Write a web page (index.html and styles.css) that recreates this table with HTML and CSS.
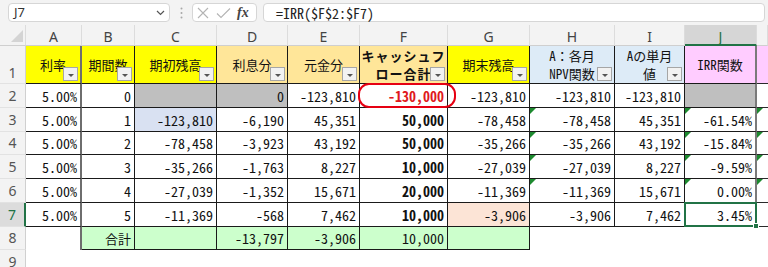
FILE: index.html
```html
<!DOCTYPE html>
<html lang="ja">
<head>
<meta charset="utf-8">
<title>IRR</title>
<link rel="stylesheet" href="styles.css">
</head>
<body>
<div class="app">
  <div class="fbar">
    <div class="namebox">
      <span class="nb-text">J7</span>
      <svg class="chev" width="9" height="6" viewBox="0 0 9 6"><path d="M1 1 L4.5 4.5 L8 1" fill="none" stroke="#555" stroke-width="1.2"/></svg>
    </div>
    <div class="dots">
      <svg width="3" height="12" viewBox="0 0 3 12"><circle cx="1.5" cy="1.5" r="1" fill="#a8a8a8"/><circle cx="1.5" cy="6" r="1" fill="#a8a8a8"/><circle cx="1.5" cy="10.5" r="1" fill="#a8a8a8"/></svg>
    </div>
    <div class="fxbox">
      <svg width="12" height="12" viewBox="0 0 12 12"><path d="M1 1 L11 11 M11 1 L1 11" stroke="#b4b4b4" stroke-width="1.1" fill="none"/></svg>
      <svg width="15" height="12" viewBox="0 0 15 12"><path d="M1 6.5 L5 10.5 L14 1.5" stroke="#b4b4b4" stroke-width="1.1" fill="none"/></svg>
      <span class="fx">fx</span>
    </div>
    <div class="formula">=IRR($F$2:$F7)</div>
  </div>

  <div class="sheet">
    <!-- column letters -->
    <div class="ch corner"><span class="tri-corner"></span></div>
    <div class="ch">A</div>
    <div class="ch">B</div>
    <div class="ch">C</div>
    <div class="ch">D</div>
    <div class="ch">E</div>
    <div class="ch">F</div>
    <div class="ch">G</div>
    <div class="ch">H</div>
    <div class="ch">I</div>
    <div class="ch sel">J</div>
    <div class="ch"></div>

    <!-- row 1 -->
    <div class="rh r1">1</div>
    <div class="c h b ab yel">利率<span class="fb"></span></div>
    <div class="c h b yel">期間数<span class="fb"></span></div>
    <div class="c h b yel">期初残高<span class="fb"></span></div>
    <div class="c h b org">利息分<span class="fb"></span></div>
    <div class="c h b org">元金分<span class="fb"></span></div>
    <div class="c h b org bold wide">キャッシュフ<br>ロー合計<span class="fb"></span></div>
    <div class="c h b yel">期末残高<span class="fb"></span></div>
    <div class="c h b blu">A：各月<br>NPV関数<span class="fb"></span></div>
    <div class="c h b blu">Aの単月<br>値<span class="fb"></span></div>
    <div class="c h b jc pnk">IRR関数</div>
    <div class="c kc pnk"></div>

    <!-- row 2 -->
    <div class="rh">2</div>
    <div class="c b ab">5.00%</div>
    <div class="c b">0</div>
    <div class="c b gry"></div>
    <div class="c b gry">0</div>
    <div class="c b">-123,810</div>
    <div class="c b bold red">-130,000<span class="oval"></span></div>
    <div class="c b">-123,810</div>
    <div class="c b">-123,810</div>
    <div class="c b">-123,810</div>
    <div class="c b jc gry"></div>
    <div class="c kc"></div>

    <!-- row 3 -->
    <div class="rh">3</div>
    <div class="c b ab">5.00%</div>
    <div class="c b">1</div>
    <div class="c b lblu">-123,810</div>
    <div class="c b">-6,190</div>
    <div class="c b">45,351</div>
    <div class="c b bold">50,000</div>
    <div class="c b">-78,458</div>
    <div class="c b"><span class="gt"></span>-78,458</div>
    <div class="c b">45,351</div>
    <div class="c b jc"><span class="gt"></span>-61.54%</div>
    <div class="c kc"><span class="gt"></span></div>

    <!-- row 4 -->
    <div class="rh">4</div>
    <div class="c b ab">5.00%</div>
    <div class="c b">2</div>
    <div class="c b">-78,458</div>
    <div class="c b">-3,923</div>
    <div class="c b">43,192</div>
    <div class="c b bold">50,000</div>
    <div class="c b">-35,266</div>
    <div class="c b"><span class="gt"></span>-35,266</div>
    <div class="c b">43,192</div>
    <div class="c b jc"><span class="gt"></span>-15.84%</div>
    <div class="c kc"><span class="gt"></span></div>

    <!-- row 5 -->
    <div class="rh">5</div>
    <div class="c b ab">5.00%</div>
    <div class="c b">3</div>
    <div class="c b">-35,266</div>
    <div class="c b">-1,763</div>
    <div class="c b">8,227</div>
    <div class="c b bold">10,000</div>
    <div class="c b">-27,039</div>
    <div class="c b"><span class="gt"></span>-27,039</div>
    <div class="c b">8,227</div>
    <div class="c b jc"><span class="gt"></span>-9.59%</div>
    <div class="c kc"><span class="gt"></span></div>

    <!-- row 6 -->
    <div class="rh">6</div>
    <div class="c b ab">5.00%</div>
    <div class="c b">4</div>
    <div class="c b">-27,039</div>
    <div class="c b">-1,352</div>
    <div class="c b">15,671</div>
    <div class="c b bold">20,000</div>
    <div class="c b">-11,369</div>
    <div class="c b"><span class="gt"></span>-11,369</div>
    <div class="c b">15,671</div>
    <div class="c b jc"><span class="gt"></span>0.00%</div>
    <div class="c kc"><span class="gt"></span></div>

    <!-- row 7 -->
    <div class="rh sel">7</div>
    <div class="c b ab">5.00%</div>
    <div class="c b">5</div>
    <div class="c b">-11,369</div>
    <div class="c b">-568</div>
    <div class="c b">7,462</div>
    <div class="c b bold">10,000</div>
    <div class="c b pch">-3,906</div>
    <div class="c b">-3,906</div>
    <div class="c b">7,462</div>
    <div class="c b jc">3.45%<span class="selbox"><span class="handle"></span></span></div>
    <div class="c kc"></div>

    <!-- row 8 -->
    <div class="rh">8</div>
    <div class="c ab"></div>
    <div class="c b grn cjk">合計</div>
    <div class="c b grn"></div>
    <div class="c b grn">-13,797</div>
    <div class="c b grn">-3,906</div>
    <div class="c b grn">10,000</div>
    <div class="c b grn"></div>
    <div class="c"></div>
    <div class="c"></div>
    <div class="c"></div>
    <div class="c"></div>

    <!-- row 9 -->
    <div class="rh">9</div>
    <div class="c"></div>
    <div class="c"></div>
    <div class="c"></div>
    <div class="c"></div>
    <div class="c"></div>
    <div class="c"></div>
    <div class="c"></div>
    <div class="c"></div>
    <div class="c"></div>
    <div class="c"></div>
    <div class="c"></div>
  </div>
</div>
</body>
</html>
```

FILE: styles.css
```css
* { box-sizing: border-box; margin: 0; padding: 0; }
html, body { background: #fff; }
body {
  width: 768px;
  height: 267px;
  overflow: hidden;
  font-family: "Noto Sans", "Liberation Sans", sans-serif;
}

/* formula bar */
.fbar {
  display: flex;
  align-items: center;
  height: 25px;
  background: #f3f3f3;
  padding: 3px 0 3px 8px;
}
.namebox {
  width: 162px;
  height: 19px;
  background: #fff;
  border: 1px solid #d6d6d6;
  border-radius: 4px;
  display: flex;
  align-items: center;
  justify-content: space-between;
  padding: 0 4px 0 5px;
}
.nb-text { font-size: 13px; color: #333; line-height: 1; }
.dots {
  width: 22px;
  display: flex;
  justify-content: center;
  align-items: center;
}
.fxbox {
  width: 65px;
  height: 19px;
  background: #fff;
  border: 1px solid #d6d6d6;
  border-radius: 4px;
  display: flex;
  align-items: center;
  padding-left: 4px;
  gap: 7px;
}
.fx {
  font-family: "Liberation Serif", serif;
  font-style: italic;
  font-weight: bold;
  font-size: 14px;
  color: #444;
  line-height: 1;
  margin-left: -1px;
}
.formula {
  margin-left: 6px;
  width: 502px;
  height: 19px;
  background: #fff;
  border: 1px solid #d6d6d6;
  border-radius: 4px;
  padding-left: 12px;
  display: flex;
  align-items: center;
  font-family: "Noto Sans Mono CJK JP", "Liberation Mono", monospace;
  font-size: 14px;
  color: #222;
}

/* grid */
.sheet {
  display: grid;
  grid-template-columns: 26px 56px 53px 82px 71px 72px 88px 82px 85px 70px 72px 1fr;
  grid-template-rows: 21px 38px 24px 24px 23px 24px 24px 24px 23px 24px;
}

.ch {
  background: #f3f3f3;
  border-right: 1px solid #dcdcdc;
  border-bottom: 1px solid #cfcfcf;
  display: flex;
  align-items: center;
  justify-content: center;
  padding-top: 3px;
  font-size: 14px;
  color: #444;
}
.ch.corner { position: relative; }
.tri-corner {
  position: absolute;
  right: 2px;
  bottom: 3px;
  width: 0;
  height: 0;
  border-left: 12px solid transparent;
  border-bottom: 12px solid #d4d4d4;
}
.ch.sel {
  background: #d6d6d6;
  color: #1f7244;
  border-bottom: 2px solid #217346;
}

.rh {
  background: #f3f3f3;
  border-right: 1px solid #d0d0d0;
  border-bottom: 1px solid #e2e2e2;
  display: flex;
  align-items: flex-end;
  justify-content: center;
  padding-bottom: 2px;
  font-size: 14px;
  color: #555;
}
.rh.r1 { padding-bottom: 1px; }
.rh.sel {
  background: #dcdcdc;
  color: #217346;
  border-right: 2px solid #217346;
}

.c {
  position: relative;
  display: flex;
  align-items: center;
  justify-content: flex-end;
  padding-right: 3px;
  font-family: "Noto Sans Mono CJK JP", "Liberation Mono", monospace;
  font-size: 14px;
  color: #111;
  white-space: nowrap;
}
.b {
  border-right: 1px solid #1a1a1a;
  border-bottom: 1px solid #1a1a1a;
}
.ab { border-right: 2px solid #6e6e6e; }
.jc { border-right: 2px solid #7a7a7a; }
.kc { border-bottom: 1px solid #2a2a2a; }

.h {
  justify-content: center;
  text-align: center;
  padding: 0;
  font-size: 13px;
  line-height: 18px;
  white-space: normal;
}
.wide { letter-spacing: 1px; }
.bold { font-weight: bold; }
.red { color: #e0191d; }
.cjk { font-size: 13px; }

.yel { background: #ffff00; }
.org { background: #ffe699; }
.blu { background: #ddebf7; }
.pnk { background: #ffccff; }
.gry { background: #bfbfbf; }
.lblu { background: #d9e1f2; }
.pch { background: #fce4d6; }
.grn { background: #ccffcc; }

.fb {
  position: absolute;
  right: 2px;
  bottom: 2px;
  width: 15px;
  height: 14px;
  background: #f2f2f2;
  border: 1px solid #a6a6a6;
}
.fb::after {
  content: "";
  position: absolute;
  left: 4px;
  top: 6px;
  width: 0;
  height: 0;
  border-left: 3px solid transparent;
  border-right: 3px solid transparent;
  border-top: 3px solid #555;
}

.oval {
  position: absolute;
  left: -2px;
  top: -1px;
  width: 98px;
  height: 25px;
  border: 2px solid #e60012;
  border-radius: 11px;
  z-index: 2;
}

.gt {
  position: absolute;
  left: 0;
  top: 0;
  width: 0;
  height: 0;
  border-top: 6px solid #1d8a2f;
  border-right: 6px solid transparent;
}

.selbox {
  position: absolute;
  left: -1px;
  top: -1px;
  right: -2px;
  bottom: -1px;
  border: 2px solid #217346;
  z-index: 3;
}
.handle {
  position: absolute;
  right: -4px;
  bottom: -4px;
  width: 6px;
  height: 6px;
  background: #217346;
  border: 1px solid #fff;
}
```
